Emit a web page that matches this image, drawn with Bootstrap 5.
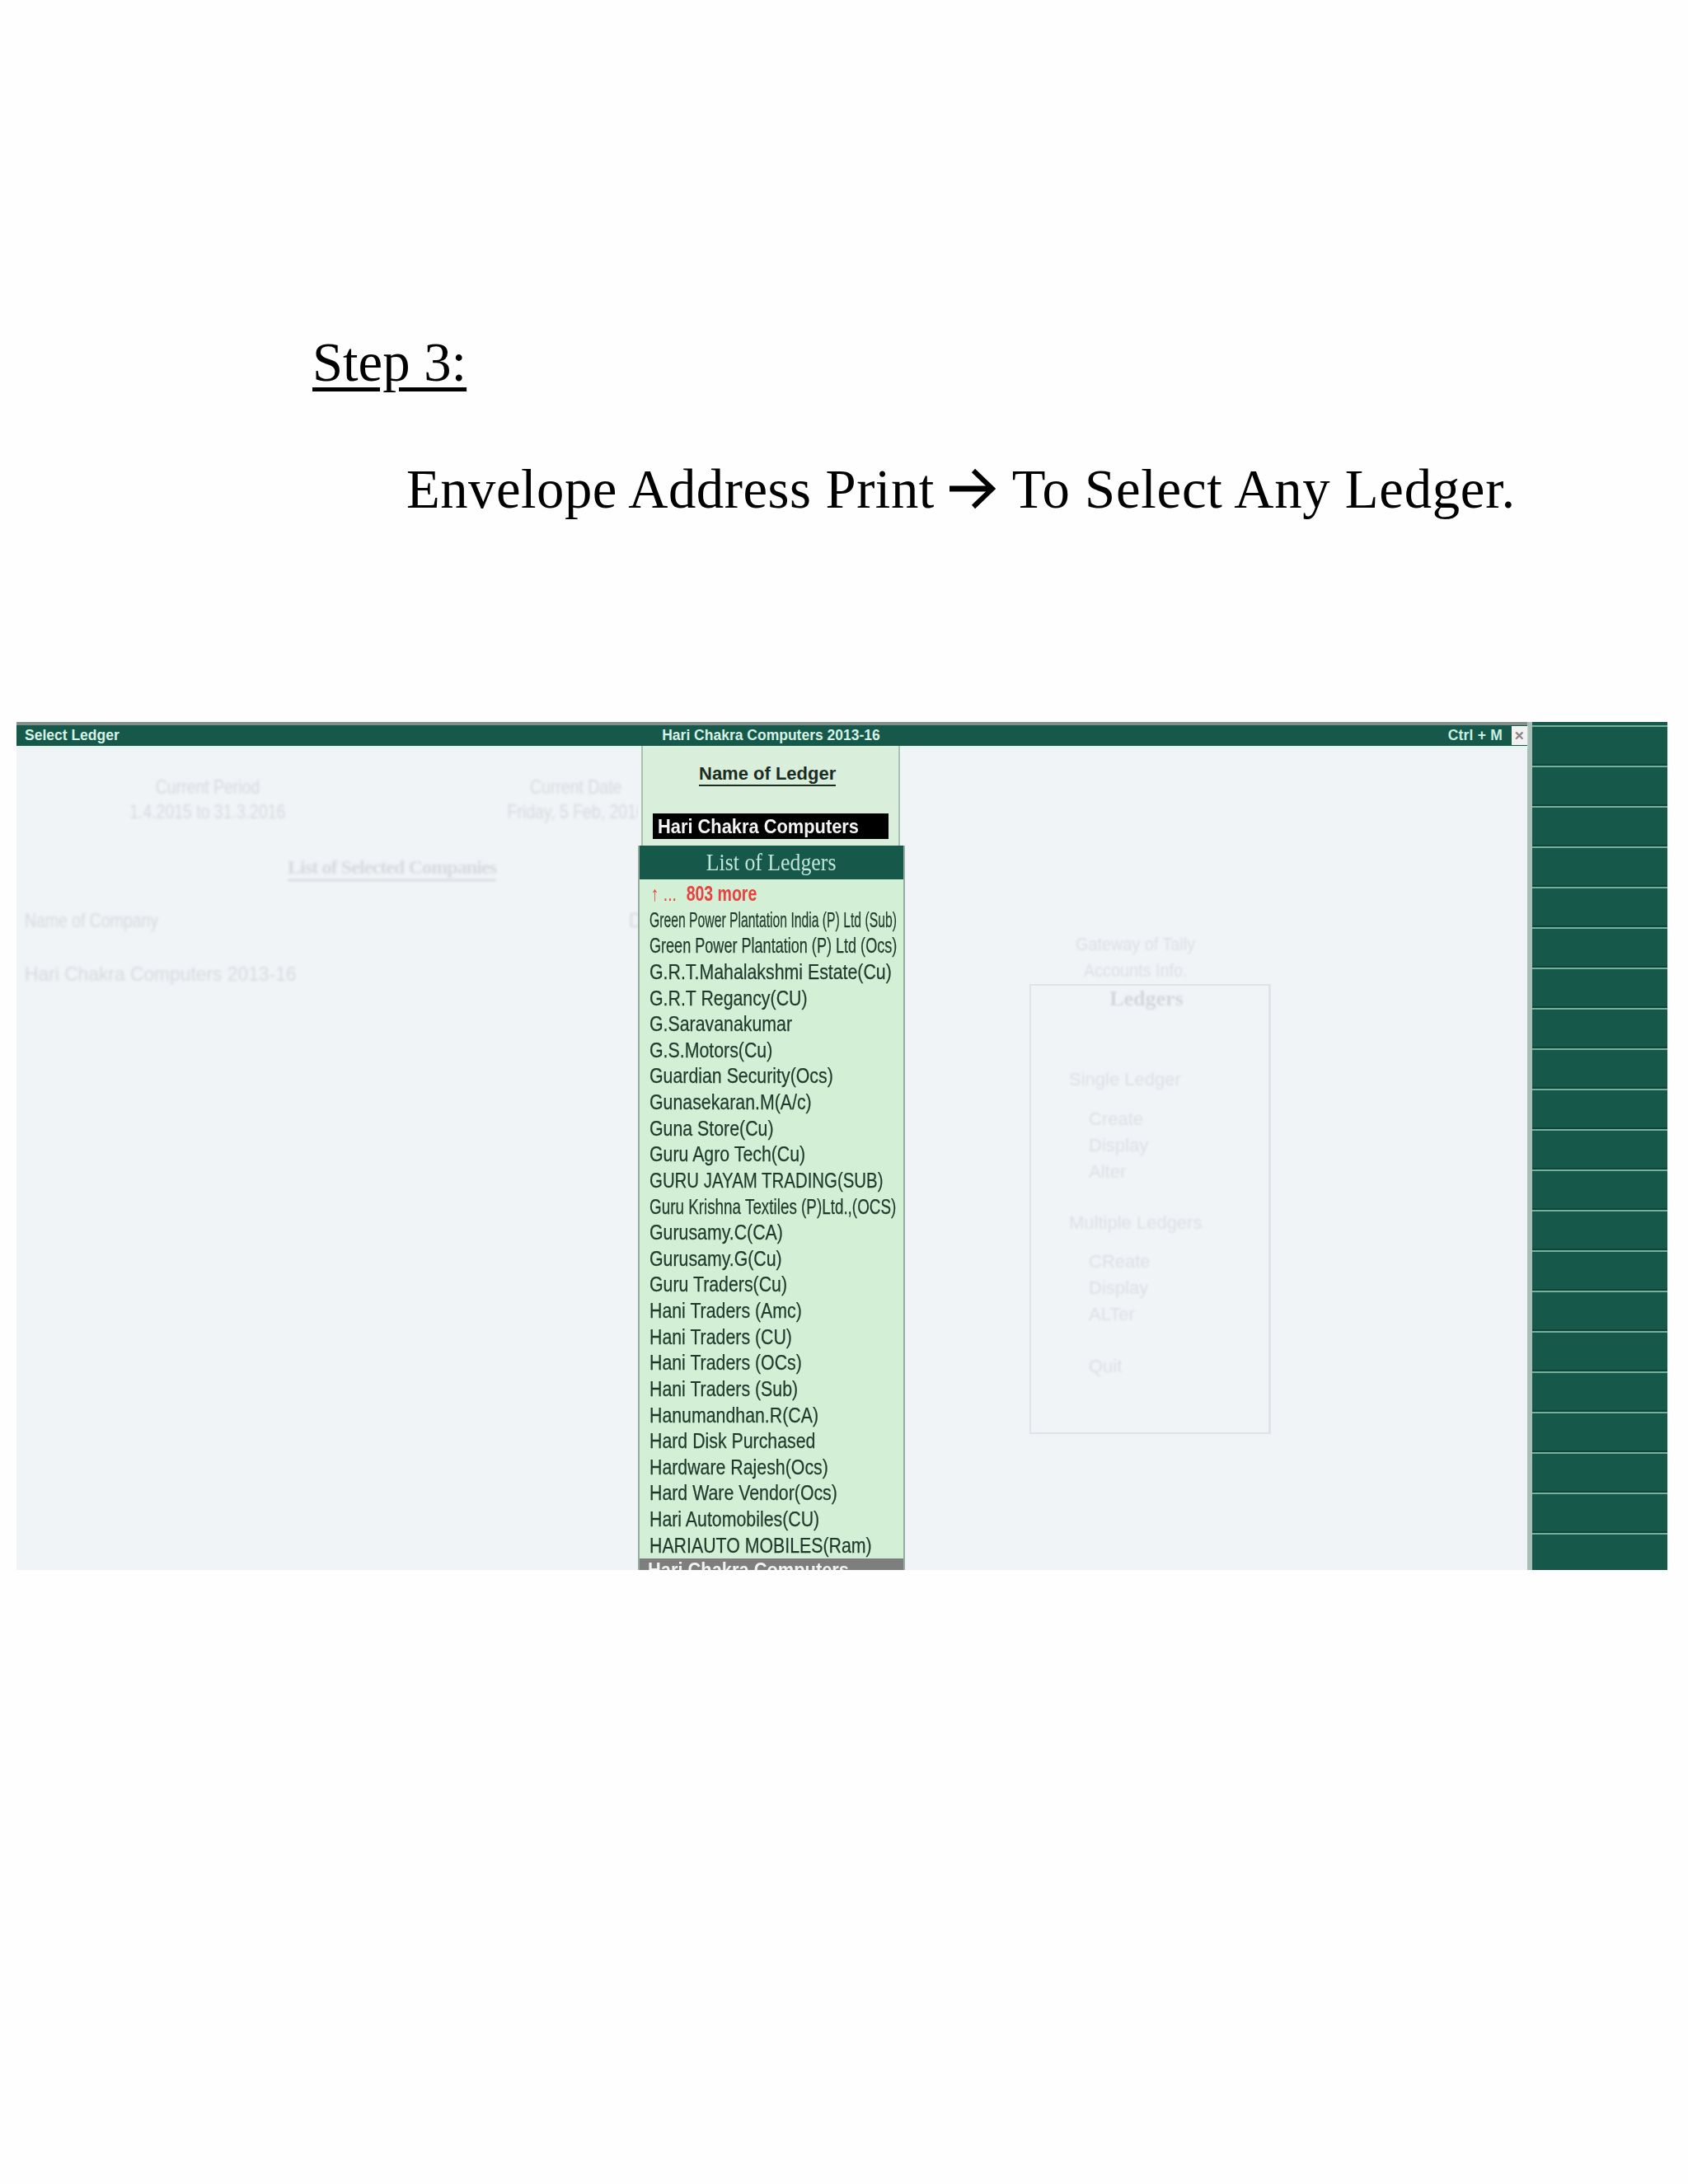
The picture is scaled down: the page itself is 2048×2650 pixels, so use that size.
<!DOCTYPE html>
<html lang="en">
<head>
<meta charset="utf-8">
<title>Step 3</title>
<link rel="stylesheet" href="https://cdn.jsdelivr.net/npm/bootstrap@5.3.0/dist/css/bootstrap.min.css">
<style>
html,body{margin:0;background:#fefefe}
.sheet{height:2650px;padding-top:400px;overflow:hidden;font-family:"Liberation Serif",serif;color:#000}
.step-head{font-family:"Liberation Serif",serif;font-size:66.7px;line-height:80px;font-weight:400;margin:0 0 74px 379px;text-decoration:underline;text-decoration-thickness:5px;text-underline-offset:8px}
.step-text{font-size:66.7px;line-height:80px;margin:0 0 242px 493px;white-space:nowrap;letter-spacing:.5px}
.step-tail{letter-spacing:.75px}
.step-arrow{width:58px;height:50px;margin:0 20px 0 16px;vertical-align:-2px}
.tally{margin-left:20px;width:2003px;height:1029px;overflow:hidden;font-family:"Liberation Sans",sans-serif}
.tally-main{width:1833px;background:#f1f4f7}
.top-bar{height:29px;background:#16594a;border-top:4px solid #7f918a;color:#d6f3e8;font-size:17.5px;font-weight:700;padding:0 0 0 10px;flex:none;box-shadow:0 3px 2px #e3f6ee}
.top-bar span{line-height:25px}
.bar-name{position:absolute;left:779px;width:273px;text-align:center;white-space:nowrap}
.bar-keys{margin-left:auto;letter-spacing:.2px;margin-right:11px;color:#c9efe2}
.bar-close{width:19px;height:23px;background:#f2f2f2;color:#8b8080;font-size:15px;line-height:23px!important;text-align:center;margin-top:1px}
.side-rail{width:170px;background:#16594a;border-left:6px solid #7fa094;border-image:linear-gradient(90deg,#a8bfb6,#3f7a6a) 1;padding-top:4px;flex:none}
.rail-key{height:49px;border-top:2px solid #75b09d;border-bottom:2px solid #0f4439;flex:none}
.rail-end{flex:1;border-top:2px solid #75b09d}
.pane-left{width:754px;padding-top:35px;overflow:hidden;flex:none}
.ghost{color:#d5dade;font-size:24px;line-height:30px;white-space:nowrap;filter:blur(1.4px)}
.ghost-a{width:464px;text-align:center;flex:none}
.ghost-b{width:430px;text-align:center;flex:none}
.ghost-sq span{display:inline-block;transform:scaleX(.81)}
.ghost-cap{font-family:"Liberation Serif",serif;font-weight:700;width:253px;margin:37px 0 0 329px;border-bottom:2px solid #cfd5d9;text-align:center;letter-spacing:-.9px}
.ghost-co{margin:33px 0 0 10px;display:flex;justify-content:space-between;width:750px}
.ghost-co span:first-child{display:inline-block;transform:scaleX(.81);transform-origin:0 50%}
.ghost-hc{margin:35px 0 0 10px;transform:scaleX(.95);transform-origin:0 50%}
.pane-mid{width:324px;flex:none}
.name-card{margin:0 6px 0 4px;height:121px;background:#d9efdc;border-left:2px solid #a9c2b4;border-right:2px solid #a9c2b4;padding-top:21px}
.name-title{font-size:22px;line-height:26px;font-weight:700;color:#1c2b24;width:fit-content;margin:0 0 0 68px;border-bottom:2px solid #1c2b24}
.name-input{margin:33px 12px 0 12px;height:31px;background:#000;color:#f4f4f4;font-size:24px;line-height:31px;font-weight:700;padding-left:6px;white-space:nowrap}
.name-input span{display:inline-block;transform:scaleX(.91);transform-origin:0 50%}
.ledger-panel{height:879px;background:#d3efd5;border-left:2px solid #93ac9f;border-right:2px solid #93ac9f;overflow:hidden}
.ledger-head{height:41px;background:#16594a;color:#bfe6d8;font-family:"Liberation Serif",serif;font-size:30px;line-height:40px;text-align:center;margin:0 -2px}
.ledger-head span{display:inline-block;transform:scaleX(.86)}
.ledger-list{margin:0;padding:2px 0 0;list-style:none;filter:blur(.55px)}
.ledger-row{height:31.64px;line-height:31.64px;font-size:26px;color:#1d3b2c;-webkit-text-stroke:.25px #1d3b2c;white-space:nowrap;padding-left:12px;transform-origin:12px 50%;transform:scaleX(.82)}
.row-more{color:#e8413f;-webkit-text-stroke:0;font-size:25px;transform:scaleX(.78);padding-left:14px}
.row-more b{margin-left:8px}
.sq-60{transform:scaleX(.605)}
.sq-69{transform:scaleX(.695)}
.sq-78{transform:scaleX(.785)}
.sq-72{transform:scaleX(.725)}
.row-current{height:20px;background:#7d7f7e;color:#f2f2f2;font-size:24px;font-weight:700;padding:0 0 0 12px;margin:-.5px -2px 0;white-space:nowrap;line-height:28px}
.row-current span{display:inline-block;transform:scaleX(.91);transform-origin:0 50%;filter:blur(.6px)}
.pane-right{flex:1;padding:225px 0 0 151px;overflow:hidden}
.ghost-light{color:#dcdfe4;font-size:22px;line-height:32px;white-space:nowrap;filter:blur(1.3px)}
.gw-head{width:258px;text-align:center}
.gw-head span{display:inline-block;transform:scaleX(.9)}
.gw-box{width:293px;height:546px;margin-top:0;border:2px solid #e0e3e8;border-right-width:3px}
.gw-title{font-family:"Liberation Serif",serif;font-weight:700;font-size:26px;text-align:center;color:#d3d7dc;margin-left:-8px}
.gw-group{margin-left:46px}
.gw-item{margin-left:70px}
.gap-68{margin-top:66px}.gap-16{margin-top:16px}.gap-30{margin-top:30px}.gap-15{margin-top:15px}.gap-31{margin-top:31px}
</style>
</head>
<body>
<div class="sheet">
  <h1 class="step-head">Step 3:</h1>
  <p class="step-text">Envelope Address Print<svg class="step-arrow" viewBox="0 0 58 50" aria-hidden="true"><path d="M2 25H52" stroke="#000" stroke-width="7" fill="none"/><path d="M31 3L54 25L31 47" stroke="#000" stroke-width="6" fill="none"/></svg><span class="step-tail">To Select Any Ledger.</span></p>

  <div class="tally d-flex">
    <div class="tally-main d-flex flex-column position-relative">
      <div class="top-bar d-flex">
        <span>Select Ledger</span>
        <span class="bar-name">Hari Chakra Computers 2013-16</span>
        <span class="bar-keys">Ctrl + M</span>
        <span class="bar-close">✕</span>
      </div>
      <div class="d-flex flex-grow-1 overflow-hidden">
        <div class="pane-left">
          <div class="d-flex">
            <div class="ghost ghost-a ghost-sq"><span>Current Period</span><br><span>1.4.2015 to 31.3.2016</span></div>
            <div class="ghost ghost-b ghost-sq"><span>Current Date</span><br><span>Friday, 5 Feb, 2016</span></div>
          </div>
          <div class="ghost ghost-cap">List of Selected Companies</div>
          <div class="ghost ghost-co"><span>Name of Company</span><span>D</span></div>
          <div class="ghost ghost-hc">Hari Chakra Computers 2013-16</div>
        </div>
        <div class="pane-mid">
          <div class="name-card">
            <div class="name-title">Name of Ledger</div>
            <div class="name-input"><span>Hari Chakra Computers</span></div>
          </div>
          <div class="ledger-panel">
            <div class="ledger-head"><span>List of Ledgers</span></div>
            <ul class="ledger-list">
              <li class="ledger-row row-more">↑ ... <b>803 more</b></li>
              <li class="ledger-row sq-60">Green Power Plantation India (P) Ltd (Sub)</li>
              <li class="ledger-row sq-69">Green Power Plantation (P) Ltd (Ocs)</li>
              <li class="ledger-row">G.R.T.Mahalakshmi Estate(Cu)</li>
              <li class="ledger-row">G.R.T Regancy(CU)</li>
              <li class="ledger-row">G.Saravanakumar</li>
              <li class="ledger-row">G.S.Motors(Cu)</li>
              <li class="ledger-row">Guardian Security(Ocs)</li>
              <li class="ledger-row">Gunasekaran.M(A/c)</li>
              <li class="ledger-row">Guna Store(Cu)</li>
              <li class="ledger-row">Guru Agro Tech(Cu)</li>
              <li class="ledger-row sq-78">GURU JAYAM TRADING(SUB)</li>
              <li class="ledger-row sq-72">Guru Krishna Textiles (P)Ltd.,(OCS)</li>
              <li class="ledger-row">Gurusamy.C(CA)</li>
              <li class="ledger-row">Gurusamy.G(Cu)</li>
              <li class="ledger-row">Guru Traders(Cu)</li>
              <li class="ledger-row">Hani Traders (Amc)</li>
              <li class="ledger-row">Hani Traders (CU)</li>
              <li class="ledger-row">Hani Traders (OCs)</li>
              <li class="ledger-row">Hani Traders (Sub)</li>
              <li class="ledger-row">Hanumandhan.R(CA)</li>
              <li class="ledger-row">Hard Disk Purchased</li>
              <li class="ledger-row">Hardware Rajesh(Ocs)</li>
              <li class="ledger-row">Hard Ware Vendor(Ocs)</li>
              <li class="ledger-row">Hari Automobiles(CU)</li>
              <li class="ledger-row">HARIAUTO MOBILES(Ram)</li>
            </ul>
            <div class="row-current"><span>Hari Chakra Computers</span></div>
          </div>
        </div>
        <div class="pane-right">
          <div class="ghost-light gw-head"><span>Gateway of Tally</span></div>
          <div class="ghost-light gw-head"><span>Accounts Info.</span></div>
          <div class="gw-box">
            <div class="ghost-light gw-title">Ledgers</div>
            <div class="ghost-light gw-group gap-68">Single Ledger</div>
            <div class="ghost-light gw-item gap-16">Create</div>
            <div class="ghost-light gw-item">Display</div>
            <div class="ghost-light gw-item">Alter</div>
            <div class="ghost-light gw-group gap-30">Multiple Ledgers</div>
            <div class="ghost-light gw-item gap-15">CReate</div>
            <div class="ghost-light gw-item">Display</div>
            <div class="ghost-light gw-item">ALTer</div>
            <div class="ghost-light gw-item gap-31">Quit</div>
          </div>
        </div>
      </div>
    </div>
    <div class="side-rail d-flex flex-column">
      <div class="rail-key"></div><div class="rail-key"></div><div class="rail-key"></div><div class="rail-key"></div><div class="rail-key"></div>
      <div class="rail-key"></div><div class="rail-key"></div><div class="rail-key"></div><div class="rail-key"></div><div class="rail-key"></div>
      <div class="rail-key"></div><div class="rail-key"></div><div class="rail-key"></div><div class="rail-key"></div><div class="rail-key"></div>
      <div class="rail-key"></div><div class="rail-key"></div><div class="rail-key"></div><div class="rail-key"></div><div class="rail-key"></div>
      <div class="rail-end"></div>
    </div>
  </div>
</div>
<script src="https://cdn.jsdelivr.net/npm/bootstrap@5.3.0/dist/js/bootstrap.bundle.min.js"></script>
</body>
</html>
